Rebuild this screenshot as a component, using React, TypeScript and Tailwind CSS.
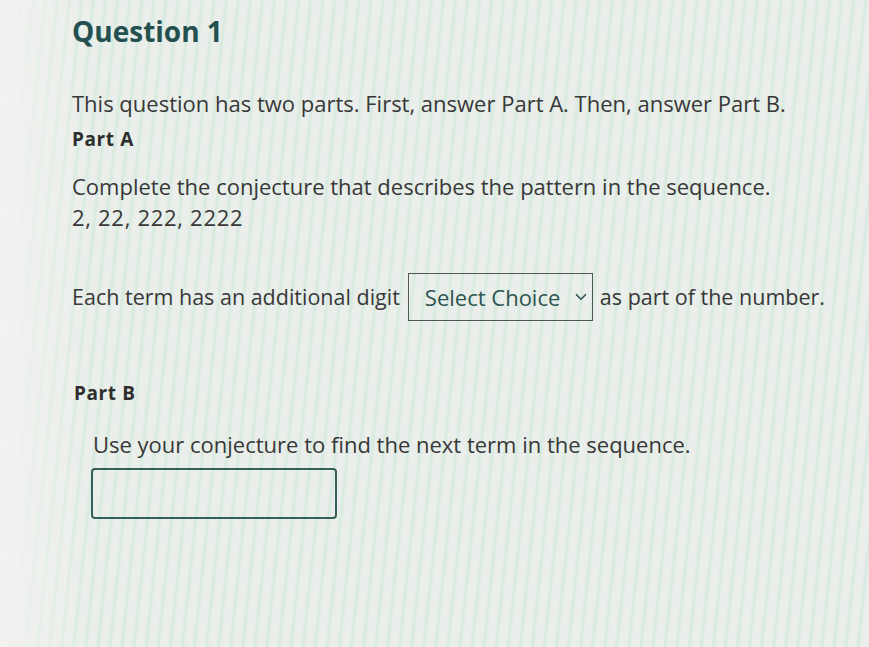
import { ChevronDown } from 'lucide-react'

export default function App() {
  return (
    <div className="relative h-[647px] w-[869px] overflow-hidden bg-[#e4ebe6] font-['Open_Sans',sans-serif] text-[#383838]">
      <div className="absolute inset-0 bg-[repeating-linear-gradient(96deg,#ecefec_0px,#ecefec_6px,#d4eadd_9px,#ecefec_12px)] opacity-85" />
      <div className="absolute inset-y-0 left-0 w-[90px] bg-gradient-to-r from-[#f2f2f0] to-transparent" />

      <div className="relative flex flex-col pl-[72px] pt-[13px]">
        <h1 className="text-[28px] font-bold leading-[36px] text-[#24514f]">Question 1</h1>

        <p className="mt-[40px] text-[22px] leading-[28px]">
          This question has two parts. First, answer Part A. Then, answer Part B.
        </p>
        <h2 className="mt-[10px] text-[19px] font-bold leading-[24px] tracking-[0.6px] text-[#2e2e2e]">Part A</h2>

        <p className="mt-[21px] text-[22px] leading-[28px]">
          Complete the conjecture that describes the pattern in the sequence.
        </p>
        <p className="mt-[3px] text-[22px] leading-[28px] tracking-[0.7px]">2, 22, 222, 2222</p>

        <div className="mt-[42px] flex h-[48px] items-center text-[21.5px]">
          <span>Each term has an additional digit</span>
          <div className="ml-[8px] flex h-[48px] w-[185px] items-center border-[1.5px] border-[#4d5955] pl-[16px] pr-[2px]">
            <span className="text-[22px] text-[#2c5450]">Select Choice</span>
            <ChevronDown className="ml-auto h-[18px] w-[18px] text-[#2c5450]" strokeWidth={2.2} />
          </div>
          <span className="ml-[7px]">as part of the number.</span>
        </div>

        <h2 className="mt-[60px] pl-[2px] text-[19px] font-bold leading-[24px] tracking-[0.6px] text-[#2e2e2e]">Part B</h2>

        <div className="ml-[19px] flex flex-col">
          <p className="mt-[25px] pl-[2px] text-[22px] leading-[28px]">
            Use your conjecture to find the next term in the sequence.
          </p>
          <div className="mt-[10px] h-[51px] w-[246px] rounded-[4px] border-[2.5px] border-[#34605a]" />
        </div>
      </div>
    </div>
  )
}
